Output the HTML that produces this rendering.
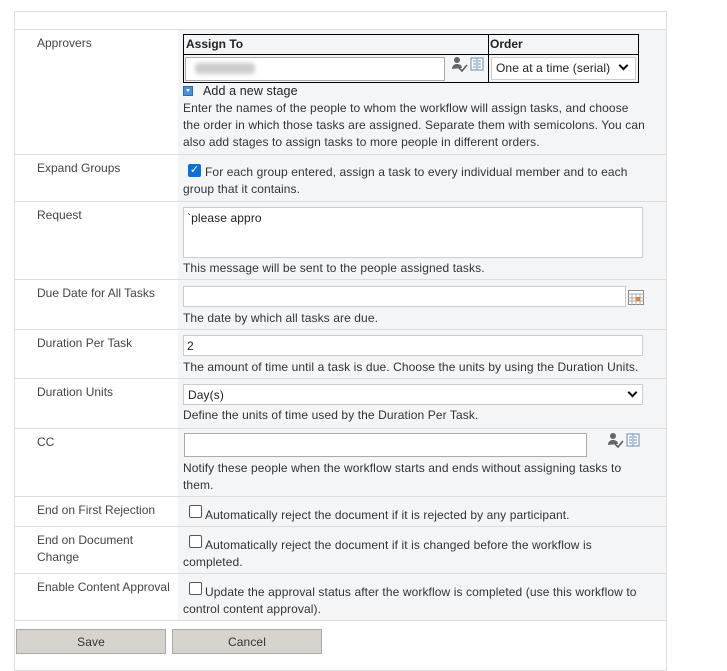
<!DOCTYPE html>
<html><head><meta charset="utf-8"><style>
*{box-sizing:border-box}
body{margin:0;width:727px;height:661px;background:#fff;font-family:"Liberation Sans",sans-serif;font-size:12px;letter-spacing:.1px;color:#444;position:relative;overflow:hidden}
.a{position:absolute;white-space:nowrap}
.box{position:absolute;left:14px;top:11px;width:653px;height:660px;border:1px solid #ddd;background:#fff}
.rc{position:absolute;left:178px;width:488px;background:#f4f5f7}
.hl{position:absolute;left:15px;width:651px;height:1px;background:#ddd}
.lbl{position:absolute;left:37px;color:#444;line-height:17px;letter-spacing:0}
.t{position:absolute;left:183px;color:#333;line-height:17px;white-space:nowrap}
.inp{position:absolute;background:#fff;border:1px solid #ccc}
.cb{position:absolute;width:13px;height:13px;border:1px solid #555;border-radius:2px;background:#fff}
.btn{position:absolute;top:629px;width:150px;height:25px;background:#d7d4ce;border:1px solid #a9a9a9;text-align:center;line-height:24px;color:#333;font-size:12px}
.chev{position:absolute;width:7px;height:7px;border-right:2px solid #111;border-bottom:2px solid #111;transform:rotate(45deg)}
</style></head><body>
<div class="box"></div>
<div class="rc" style="top:30px;height:590px"></div>
<div class="hl" style="top:29px"></div>
<div class="hl" style="top:154px"></div>
<div class="hl" style="top:201px"></div>
<div class="hl" style="top:279px"></div>
<div class="hl" style="top:329px"></div>
<div class="hl" style="top:378px"></div>
<div class="hl" style="top:428px"></div>
<div class="hl" style="top:496px"></div>
<div class="hl" style="top:526px"></div>
<div class="hl" style="top:573px"></div>
<div class="hl" style="top:620px"></div>

<div class="lbl" style="top:35px">Approvers</div>
<div class="lbl" style="top:160px">Expand Groups</div>
<div class="lbl" style="top:207px">Request</div>
<div class="lbl" style="top:285px">Due Date for All Tasks</div>
<div class="lbl" style="top:335px">Duration Per Task</div>
<div class="lbl" style="top:384px">Duration Units</div>
<div class="lbl" style="top:434px">CC</div>
<div class="lbl" style="top:502px">End on First Rejection</div>
<div class="lbl" style="top:532px">End on Document<br>Change</div>
<div class="lbl" style="top:579px">Enable Content Approval</div>

<div class="a" style="left:183px;top:34px;width:456px;height:49px;border:1px solid #000"></div>
<div class="a" style="left:184px;top:54px;width:454px;height:1px;background:#000"></div>
<div class="a" style="left:488px;top:35px;width:1px;height:47px;background:#000"></div>
<div class="a" style="left:186px;top:37px;font-weight:bold;color:#222;font-size:12px;letter-spacing:0">Assign To</div>
<div class="a" style="left:490px;top:37px;font-weight:bold;color:#222;font-size:12px;letter-spacing:0">Order</div>
<div class="inp" style="left:185px;top:57px;width:260px;height:24px;border-color:#aaa"></div>
<div class="a" style="left:195px;top:63px;width:60px;height:11px;background:#ccc;border-radius:4px;filter:blur(2px)"></div>
<svg class="a" style="left:451px;top:56px" width="34" height="18" viewBox="0 0 34 18"><circle cx="6" cy="4" r="3" fill="#666"/><path d="M1 13c0-4 3-5 5-5s5 1 5 4" fill="#666"/><path d="M8 12l3 3 5-6" stroke="#555" stroke-width="1.5" fill="none"/><rect x="20" y="2" width="12" height="12" fill="#fff" stroke="#6b8bb0"/><path d="M26 2v12M22 5h3M22 8h3M22 11h3M27 5h3M27 8h3M27 11h3" stroke="#6b8bb0"/></svg>
<div class="inp" style="left:491px;top:57px;width:145px;height:23px"></div>
<div class="a" style="left:496px;top:61px;font-size:12px;color:#222">One at a time (serial)</div>
<div class="chev" style="left:620px;top:62px"></div>

<div class="a" style="left:183px;top:86px;width:10px;height:10px;background:#4a8fd8;border:1px solid #2a6cb8"></div>
<div class="a" style="left:186px;top:89px;border:2px solid transparent;border-top:3px solid #fff;width:0;height:0;border-left-width:2px"></div>
<div class="a" style="left:203px;top:84px;font-size:12.5px;color:#222">Add a new stage</div>
<div class="t" style="top:100px">Enter the names of the people to whom the workflow will assign tasks, and choose<br>the order in which those tasks are assigned. Separate them with semicolons. You can<br>also add stages to assign tasks to more people in different orders.</div>

<div class="a" style="left:188px;top:164px;width:13px;height:13px;background:#0b6fd6;border-radius:2px;color:#fff;font-size:11px;line-height:13px;text-align:center">✓</div>
<div class="t" style="top:164px;left:205px">For each group entered, assign a task to every individual member and to each</div>
<div class="t" style="top:181px">group that it contains.</div>

<div class="inp" style="left:183px;top:207px;width:460px;height:51px"></div>
<div class="a" style="left:187px;top:211px;color:#222">`please appro</div>
<div class="t" style="top:260px">This message will be sent to the people assigned tasks.</div>

<div class="inp" style="left:183px;top:286px;width:443px;height:21px"></div>
<svg class="a" style="left:628px;top:290px" width="16" height="15"><rect x=".5" y=".5" width="15" height="14" fill="#fff" stroke="#888"/><path d="M0 4h16M4 4v11M8 4v11M12 4v11M0 8h16M0 11h16" stroke="#aaa"/><rect x="8" y="7" width="4" height="4" fill="#e08030"/></svg>
<div class="t" style="top:310px">The date by which all tasks are due.</div>

<div class="inp" style="left:183px;top:335px;width:460px;height:21px"></div>
<div class="a" style="left:187px;top:339px;color:#222">2</div>
<div class="t" style="top:359px">The amount of time until a task is due. Choose the units by using the Duration Units.</div>

<div class="inp" style="left:183px;top:384px;width:460px;height:21px"></div>
<div class="a" style="left:188px;top:388px;color:#222">Day(s)</div>
<div class="chev" style="left:629px;top:389px"></div>
<div class="t" style="top:407px">Define the units of time used by the Duration Per Task.</div>

<div class="inp" style="left:184px;top:433px;width:403px;height:24px;border-color:#aaa"></div>
<svg class="a" style="left:607px;top:432px" width="34" height="18" viewBox="0 0 34 18"><circle cx="6" cy="4" r="3" fill="#666"/><path d="M1 13c0-4 3-5 5-5s5 1 5 4" fill="#666"/><path d="M8 12l3 3 5-6" stroke="#555" stroke-width="1.5" fill="none"/><rect x="20" y="2" width="12" height="12" fill="#fff" stroke="#6b8bb0"/><path d="M26 2v12M22 5h3M22 8h3M22 11h3M27 5h3M27 8h3M27 11h3" stroke="#6b8bb0"/></svg>
<div class="t" style="top:460px">Notify these people when the workflow starts and ends without assigning tasks to<br>them.</div>

<div class="cb" style="left:189px;top:505px"></div>
<div class="t" style="top:507px;left:205px">Automatically reject the document if it is rejected by any participant.</div>
<div class="cb" style="left:189px;top:535px"></div>
<div class="t" style="top:537px;left:205px">Automatically reject the document if it is changed before the workflow is</div>
<div class="t" style="top:554px">completed.</div>
<div class="cb" style="left:189px;top:582px"></div>
<div class="t" style="top:584px;left:205px">Update the approval status after the workflow is completed (use this workflow to</div>
<div class="t" style="top:601px">control content approval).</div>

<div class="btn" style="left:16px">Save</div>
<div class="btn" style="left:172px">Cancel</div>
</body></html>
